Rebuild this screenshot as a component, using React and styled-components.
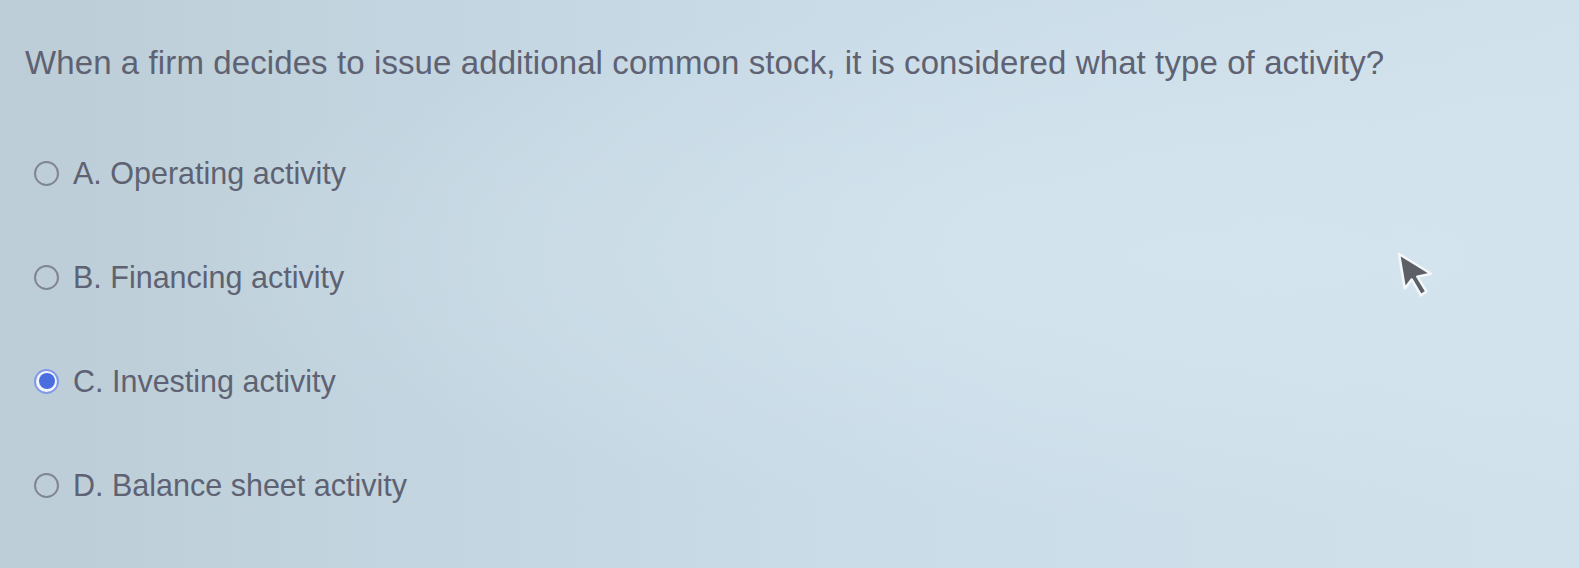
import React from "react";
import styled, { createGlobalStyle } from "styled-components";

const Global = createGlobalStyle`
  html, body { margin: 0; padding: 0; }
  body {
    width: 1579px;
    height: 568px;
    overflow: hidden;
    font-family: "Liberation Sans", Arial, sans-serif;
  }
`;

const Page = styled.div`
  position: relative;
  width: 1579px;
  height: 568px;
  box-sizing: border-box;
  padding: 40px 0 0 25px;
  background:
    radial-gradient(ellipse at 78% 45%, rgba(214, 230, 240, 0.8) 0%, rgba(214, 230, 240, 0) 60%),
    linear-gradient(90deg, #bccdd7 0%, #c4d6e1 30%, #cbdde9 60%, #d1e1eb 100%);
  display: flex;
  flex-direction: column;
`;

const Question = styled.div`
  font-size: 33px;
  color: #5e6272;
  letter-spacing: 0.1px;
  line-height: 46px;
  margin-bottom: 65px;
`;

const Options = styled.div`
  display: flex;
  flex-direction: column;
  gap: 60px;
  padding-left: 9px;
`;

const Option = styled.label`
  display: flex;
  align-items: center;
  gap: 14px;
  font-size: 30.5px;
  color: #5e6272;
  line-height: 44px;
  height: 44px;
`;

const Radio = styled.span`
  width: 25px;
  height: 25px;
  box-sizing: border-box;
  border-radius: 50%;
  border: 2.5px solid ${(p) => (p.$checked ? "#8399e8" : "#80868f")};
  background: ${(p) => (p.$checked ? "#f2f5fb" : "transparent")};
  display: flex;
  align-items: center;
  justify-content: center;
  flex: none;
  &::after {
    content: "";
    display: ${(p) => (p.$checked ? "block" : "none")};
    width: 16px;
    height: 16px;
    border-radius: 50%;
    background: #4a6de0;
  }
`;

const Cursor = styled.svg`
  position: absolute;
  left: 1396px;
  top: 251px;
`;

const options = [
  { label: "A. Operating activity" },
  { label: "B. Financing activity" },
  { label: "C. Investing activity", checked: true },
  { label: "D. Balance sheet activity" },
];

export default function App() {
  return (
    <Page>
      <Global />
      <Question>
        When a firm decides to issue additional common stock, it is considered what type of activity?
      </Question>
      <Options>
        {options.map((o) => (
          <Option key={o.label}>
            <Radio $checked={o.checked} />
            {o.label}
          </Option>
        ))}
      </Options>
      <Cursor width="38" height="52" viewBox="0 0 38 52">
        <path
          d="M3 3 L4 38 L12 30 L19 47 L25 44 L18 28 L32 27 Z"
          fill="#5c5f66"
          stroke="#f4f7fa"
          strokeWidth="2.5"
          strokeLinejoin="round"
          transform="rotate(-8 3 3)"
        />
      </Cursor>
    </Page>
  );
}
